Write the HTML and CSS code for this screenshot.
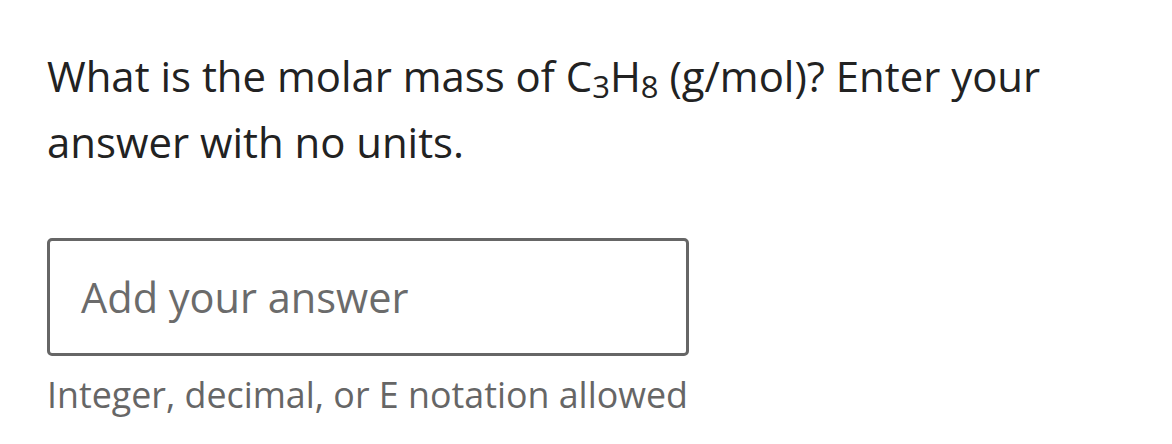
FILE: index.html
```html
<!DOCTYPE html>
<html>
<head>
<meta charset="utf-8">
<link rel="stylesheet" href="styles.css">
</head>
<body>
<div class="question">
  <p class="prompt">What is the molar mass of C<sub>3</sub>H<sub>8</sub> (g/mol)? Enter your answer with no units.</p>
  <div class="answer-box"><span class="placeholder">Add your answer</span></div>
  <p class="hint">Integer, decimal, or E notation allowed</p>
</div>
</body>
</html>
```
FILE: styles.css
```css
html, body {
  margin: 0;
  padding: 0;
  background: #ffffff;
}
body {
  font-family: "Open Sans", "Liberation Sans", sans-serif;
}
.question {
  padding: 43px 0 0 47px;
  width: 1030px;
}
.prompt {
  margin: 0;
  font-size: 41.9px;
  line-height: 66px;
  color: #222222;
}
.prompt sub {
  font-size: 0.74em;
  vertical-align: -0.18em;
  line-height: 0;
}
.answer-box {
  margin-top: 63px;
  box-sizing: border-box;
  width: 642px;
  height: 118px;
  border: 3px solid #666666;
  border-radius: 5px;
  display: flex;
  align-items: center;
  padding-left: 31px;
}
.placeholder {
  font-size: 41.5px;
  color: #6b6b6b;
}
.hint {
  margin: 14px 0 0;
  font-size: 35.8px;
  color: #666666;
}
```
